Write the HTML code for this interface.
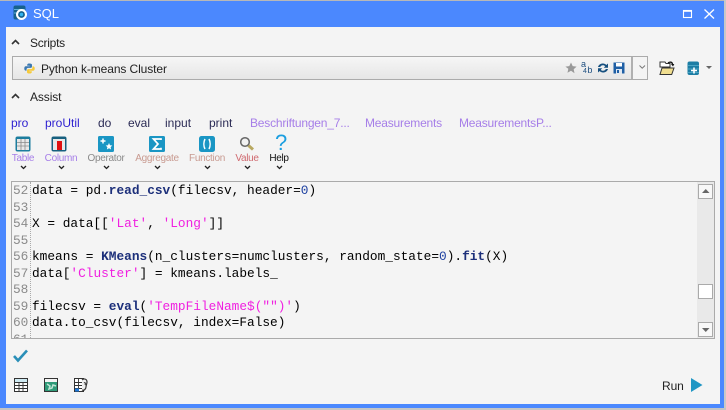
<!DOCTYPE html>
<html><head><meta charset="utf-8">
<style>
html,body{margin:0;padding:0;width:726px;height:410px;overflow:hidden;background:#f4f4f4}
*{box-sizing:border-box}
.a{position:absolute;white-space:nowrap}
#w{position:absolute;left:0;top:0;width:726px;height:410px;background:#4b88fe;overflow:hidden;font-family:"Liberation Sans",sans-serif;font-size:12px;color:#222}
#top{position:absolute;left:0;top:0;width:726px;height:1px;background:#b8b8b8}
#bot{position:absolute;left:0;top:408px;width:726px;height:2px;background:#c4c4c4}
#rgt{position:absolute;left:724px;top:0;width:2px;height:410px;background:#c8c8c8}
#c{position:absolute;left:6px;top:27px;width:714px;height:377px;background:#f4f4f4}
.t{font-size:12px;line-height:14px}
.l{font-size:12px;line-height:14px;top:116px}
.v{color:#2d1fd0}.d{color:#2b2b55}.p{color:#a67ee8;letter-spacing:-.2px}
.m{font-size:10px;line-height:12px;top:153px;transform:translateX(-50%);letter-spacing:-.3px}
.code{font-family:"Liberation Mono",monospace;font-size:12.8px;line-height:16px;color:#000}
.n{font-family:"Liberation Mono",monospace;font-size:12.8px;line-height:16px;color:#8a8a8a;left:13px}
b.k{color:#1c2f7a;font-weight:700}.s{color:#f020e0}.o{color:#1c3fa0}
svg{position:absolute;overflow:visible}
</style></head><body>
<div id="w">
<div id="top"></div><div id="rgt"></div><div id="bot"></div>
<div id="c"></div>

<svg style="left:13px;top:5px" width="16" height="16" viewBox="0 0 16 16"><rect x="0.5" y="0.5" width="12" height="14" rx="2" fill="#17618c"/><path d="M1 4.500h11M1 8h3" stroke="#5fb0d8" stroke-width="1"/><circle cx="8.500" cy="9.500" r="5.500" fill="#fff"/><circle cx="8.500" cy="9.500" r="3.400" fill="#17618c"/><circle cx="8.500" cy="9.500" r="1.700" fill="#35b5f0"/></svg>
<div class="a" style="left:33px;top:6px;font-size:13px;line-height:15px;color:#fff">SQL</div>
<svg style="left:683px;top:9px" width="10" height="10"><rect x=".5" y="1.500" width="8" height="7" fill="none" stroke="#fff" stroke-width="1.100"/><path d="M.5 2h8" stroke="#fff" stroke-width="1.600"/></svg>
<svg style="left:704px;top:9px" width="11" height="10"><path d="M.5 .5l9.500 9M10 .5L.5 9.500" stroke="#fff" stroke-width="1.300"/></svg>

<svg style="left:11px;top:39px" width="9" height="6"><path d="M1 5l3.500-3.500L8 5" fill="none" stroke="#333" stroke-width="1.600"/></svg>
<div class="a t" style="left:30px;top:36px;letter-spacing:-.25px">Scripts</div>

<div class="a" style="left:12px;top:56px;width:636px;height:24px;border:1px solid #ababab;background:linear-gradient(#f6f6f6,#e6e6e6)"></div>
<div class="a" style="left:631px;top:57px;width:2px;height:22px;background:#b0b0b0"></div>
<div class="a" style="left:633px;top:57px;width:14px;height:22px;background:#f4f4f4"></div>
<svg style="left:639px;top:65px" width="7" height="5"><path d="M.5 .5L3.200 3.200 6 .5" fill="none" stroke="#777" stroke-width="1"/></svg>
<svg style="left:24px;top:63px" width="11" height="11" viewBox="0 0 12 12"><path d="M6 .5C3.500 .5 3.500 1.500 3.500 3H6.200v.6H2C.8 3.600 .3 4.600 .3 6s.6 2.300 1.500 2.300h1V7c0-1 .8-1.700 1.800-1.700H7.400c.8 0 1.300-.6 1.300-1.400V2C8.700 1 7.800 .5 6 .5z" fill="#3b78b0"/><path d="M6 11.500c2.500 0 2.500-1 2.500-2.500H5.800v-.6H10c1.200 0 1.700-1 1.700-2.400s-.6-2.300-1.500-2.300h-1V5c0 1-.8 1.700-1.800 1.700H4.600c-.8 0-1.300 .6-1.300 1.400v2c0 1 .9 1.400 2.700 1.400z" fill="#f5c93a"/></svg>
<div class="a t" style="left:41px;top:62px;letter-spacing:-.1px">Python k-means Cluster</div>
<svg style="left:565px;top:62px" width="12" height="12" viewBox="0 0 12 12"><path d="M6 .5l1.700 3.600 3.900 .5-2.900 2.700 .8 3.900L6 8.800 2.500 10.700l.8-3.900L.4 4.600l3.900-.5z" fill="#999"/></svg>
<div class="a" style="left:581px;top:60px;font-size:9px;line-height:9px;color:#1f4f80">a</div>
<div class="a" style="left:583px;top:66px;font-size:9px;line-height:9px;color:#1f4f80;letter-spacing:.5px"><span style="font-size:7px">4</span>b</div>
<svg style="left:597px;top:62px" width="12" height="12" viewBox="0 0 12 12"><path d="M1 5C1.700 2.500 4 1.400 6 1.500c1.500 0 2.600 .7 3.300 1.500L11 1.500v4.300H6.800l1.400-1.500C7.600 3.500 6.800 3.200 6 3.200 4.600 3.200 3.600 4 3.200 5zM11 7c-.7 2.500-3 3.600-5 3.500-1.500 0-2.600-.7-3.300-1.500L1 10.500V6.200h4.200L3.800 7.700c.6 .8 1.400 1.100 2.200 1.100 1.400 0 2.400-.8 2.800-1.800z" fill="#17507f"/></svg>
<svg style="left:613px;top:62px" width="12" height="12" viewBox="0 0 12 12"><rect x=".5" y=".5" width="11" height="11" fill="#1f5fa5"/><rect x="3" y="1" width="6" height="3.500" fill="#fff"/><rect x="3" y="7" width="6" height="4.500" fill="#dfe8f2"/><rect x="4" y="8" width="2" height="3" fill="#1f5fa5"/></svg>
<svg style="left:659px;top:60px" width="16" height="16" viewBox="0 0 16 16"><path d="M1 2h5l1 1.500h4V7H1z" fill="#fff" stroke="#333" stroke-width="1"/><path d="M1 14.500L3 8h12l-2.300 6.500z" fill="#f0de90" stroke="#333" stroke-width="1"/><path d="M9 3c2-1.500 4-1 4.500 1" fill="none" stroke="#111" stroke-width="1.300"/><path d="M12 4h3.300L14 6.500z" fill="#111"/></svg>
<svg style="left:687px;top:61px" width="13" height="15" viewBox="0 0 13 15"><rect x="0.500" y="0.500" width="11.500" height="13.500" rx="2" fill="#1d7ea5"/><path d="M1 4.500h11M1 8h11M1 11.500h11" stroke="#5ab2d0" stroke-width=".8"/><path d="M7 6.500v6M4 9.500h6" stroke="#fff" stroke-width="1.600"/></svg>
<svg style="left:706px;top:66px" width="6" height="4"><path d="M0 0h6L3 3z" fill="#666"/></svg>

<svg style="left:11px;top:93px" width="9" height="6"><path d="M1 5l3.500-3.500L8 5" fill="none" stroke="#333" stroke-width="1.600"/></svg>
<div class="a t" style="left:30px;top:90px;letter-spacing:-.1px">Assist</div>

<div class="a l v" style="left:11px">pro</div>
<div class="a l v" style="left:45px">proUtil</div>
<div class="a l d" style="left:98px">do</div>
<div class="a l d" style="left:128px">eval</div>
<div class="a l d" style="left:165px">input</div>
<div class="a l d" style="left:209px">print</div>
<div class="a l p" style="left:250px">Beschriftungen_7...</div>
<div class="a l p" style="left:365px">Measurements</div>
<div class="a l p" style="left:459px">MeasurementsP...</div>

<svg style="left:15px;top:136px" width="16" height="16" viewBox="0 0 16 16"><rect x=".5" y=".5" width="15" height="15" rx="2" fill="#1c7d9e"/><rect x="2" y="3" width="12" height="11" fill="#e8e8e8"/><path d="M2 6.500h12M2 10h12M6 3v11M10 3v11" stroke="#8a8a8a" stroke-width=".8"/></svg>
<svg style="left:51px;top:136px" width="16" height="16" viewBox="0 0 16 16"><rect x=".5" y=".5" width="15" height="15" rx="2" fill="#17607f"/><rect x="2" y="3" width="12" height="11" fill="#e8e8e8"/><rect x="6" y="5" width="5" height="9" fill="#e01010"/></svg>
<svg style="left:98px;top:136px" width="16" height="16" viewBox="0 0 16 16"><rect width="16" height="16" rx="1.500" fill="#1a96c4"/><path d="M5 2.500v5M2.500 5h5" stroke="#fff" stroke-width="1.500"/><path d="M11 7l1 2.200 2.300 .3-1.700 1.600 .5 2.400L11 12.300 8.900 13.500l.5-2.400-1.700-1.600 2.300-.3z" fill="#fff"/></svg>
<svg style="left:149px;top:136px" width="16" height="16" viewBox="0 0 16 16"><rect width="16" height="16" rx="1.500" fill="#1a96c4"/><path d="M12 4V3H4.500L9 8l-4.500 5H12v-1.200" fill="none" stroke="#fff" stroke-width="1.700"/></svg>
<svg style="left:199px;top:136px" width="16" height="16" viewBox="0 0 16 16"><rect width="16" height="16" rx="2.500" fill="#1a96c4"/><path d="M6 3C4.500 6 4.500 10 6 13M10 3c1.500 3 1.500 7 0 10" fill="none" stroke="#fff" stroke-width="1.500"/></svg>
<svg style="left:239px;top:136px" width="16" height="16" viewBox="0 0 16 16"><circle cx="6" cy="6" r="4.300" fill="#f2f2f2" stroke="#666" stroke-width="1.500"/><path d="M9.500 9.500l4.500 4" stroke="#b8a860" stroke-width="3"/></svg>
<div class="a" style="left:275px;top:131px;font-size:22px;line-height:24px;color:#1a9ee0">?</div>

<div class="a m" style="left:23px;color:#a67ee8">Table</div>
<div class="a m" style="left:61px;color:#a67ee8">Column</div>
<div class="a m" style="left:106px;color:#8a8a8a">Operator</div>
<div class="a m" style="left:157px;color:#c89a90">Aggregate</div>
<div class="a m" style="left:207px;color:#c89a90">Function</div>
<div class="a m" style="left:247px;color:#d06a70">Value</div>
<div class="a m" style="left:279px;color:#111">Help</div>
<svg style="left:20px;top:165px" width="7" height="5"><path d="M1 1l2.500 2.500L6 1" fill="none" stroke="#222" stroke-width="1.300"/></svg>
<svg style="left:58px;top:165px" width="7" height="5"><path d="M1 1l2.500 2.500L6 1" fill="none" stroke="#222" stroke-width="1.300"/></svg>
<svg style="left:103px;top:165px" width="7" height="5"><path d="M1 1l2.500 2.500L6 1" fill="none" stroke="#222" stroke-width="1.300"/></svg>
<svg style="left:154px;top:165px" width="7" height="5"><path d="M1 1l2.500 2.500L6 1" fill="none" stroke="#222" stroke-width="1.300"/></svg>
<svg style="left:204px;top:165px" width="7" height="5"><path d="M1 1l2.500 2.500L6 1" fill="none" stroke="#222" stroke-width="1.300"/></svg>
<svg style="left:244px;top:165px" width="7" height="5"><path d="M1 1l2.500 2.500L6 1" fill="none" stroke="#222" stroke-width="1.300"/></svg>
<svg style="left:276px;top:165px" width="7" height="5"><path d="M1 1l2.500 2.500L6 1" fill="none" stroke="#222" stroke-width="1.300"/></svg>

<!-- editor -->
<div class="a" style="left:11px;top:181px;width:704px;height:158px;border:1px solid #aaa;overflow:hidden;background:#f4f4f4">
  <div class="a" style="left:18px;top:0;height:156px;border-left:1px dotted #aaa"></div>
  <div class="a" style="left:1px;top:1px;width:700px;height:155px">
    <div class="a n" style="left:0;top:0">52</div><div class="a code" style="left:19px;top:0">data = pd.<b class="k">read_csv</b>(filecsv, header=<span class="o">0</span>)</div>
    <div class="a n" style="left:0;top:16.500px">53</div>
    <div class="a n" style="left:0;top:33px">54</div><div class="a code" style="left:19px;top:33px">X = data[[<span class="s">'Lat'</span>, <span class="s">'Long'</span>]]</div>
    <div class="a n" style="left:0;top:49.500px">55</div>
    <div class="a n" style="left:0;top:66px">56</div><div class="a code" style="left:19px;top:66px">kmeans = <b class="k">KMeans</b>(n_clusters=numclusters, random_state=<span class="o">0</span>).<b class="k">fit</b>(X)</div>
    <div class="a n" style="left:0;top:82.500px">57</div><div class="a code" style="left:19px;top:82.500px">data[<span class="s">'Cluster'</span>] = kmeans.labels_</div>
    <div class="a n" style="left:0;top:99px">58</div>
    <div class="a n" style="left:0;top:115.500px">59</div><div class="a code" style="left:19px;top:115.500px">filecsv = <b class="k">eval</b>(<span class="s">'TempFileName$("")'</span>)</div>
    <div class="a n" style="left:0;top:132px">60</div><div class="a code" style="left:19px;top:132px">data.to_csv(filecsv, index=False)</div>
    <div class="a n" style="left:0;top:148.500px">61</div>
  </div>
  <div class="a" style="left:685px;top:0;width:17px;height:156px;background:#e9e9e9"></div>
  <div class="a" style="left:686px;top:2px;width:15px;height:15px;background:#f8f8f8;border:1px solid #aaa"></div>
  <div class="a" style="left:686px;top:102px;width:15px;height:15px;background:#fff;border:1px solid #aaa"></div>
  <div class="a" style="left:686px;top:140px;width:15px;height:15px;background:#f8f8f8;border:1px solid #aaa"></div>
  <svg style="left:690px;top:7px" width="8" height="5"><path d="M0 4h7.500L3.750 0z" fill="#666"/></svg>
  <svg style="left:690px;top:146px" width="8" height="5"><path d="M0 0h7.500L3.750 4z" fill="#666"/></svg>
</div>

<svg style="left:13px;top:349px" width="15" height="13" viewBox="0 0 15 13"><path d="M1 7l4 4.500L14 1.500" fill="none" stroke="#2a8fb8" stroke-width="2.600"/></svg>

<svg style="left:14px;top:378px" width="14" height="14" viewBox="0 0 14 14"><rect x=".5" y=".5" width="13" height="13" fill="#fff" stroke="#333"/><rect x="1" y="1" width="12" height="3" fill="#cfeaf2"/><path d="M1 4.500h12M1 7.500h12M1 10.500h12M5 4.500V13M9 4.500V13" stroke="#333" stroke-width=".9"/></svg>
<svg style="left:44px;top:378px" width="14" height="14" viewBox="0 0 14 14"><rect x=".5" y=".5" width="13" height="13" fill="#2f9a78" stroke="#333"/><rect x="1" y="1" width="12" height="3" fill="#f4f4f4"/><path d="M3 6l3 2-1 3 3-1 1-3 3 1" fill="none" stroke="#bfe5d5" stroke-width="1.500"/></svg>
<svg style="left:74px;top:378px" width="15" height="14" viewBox="0 0 15 14"><rect x=".5" y=".5" width="9" height="13" fill="#fff" stroke="#333"/><path d="M1 4.500h8M1 7.500h8M1 10.500h8M4.500 1v12" stroke="#333" stroke-width=".9"/><rect x="1" y="10.500" width="4" height="3" fill="#1f78d8"/><path d="M8 2c2-2 5-1 5 2 0 2-1 3-1 5s-2 4-4 3" fill="#eee" stroke="#333" stroke-width="1.200"/><path d="M10 5c1-1 2 0 1 2" fill="none" stroke="#333"/></svg>

<div class="a t" style="left:662px;top:379px;letter-spacing:-.1px">Run</div>
<svg style="left:691px;top:378px" width="12" height="14"><path d="M0 0l11.500 7L0 14z" fill="#2096c4"/></svg>
</div>
</body></html>
